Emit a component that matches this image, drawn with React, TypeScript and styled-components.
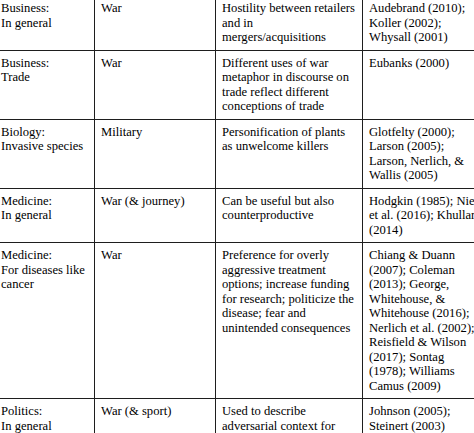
import styled, { createGlobalStyle } from 'styled-components';

const GlobalStyle = createGlobalStyle`
  html, body {
    margin: 0;
    padding: 0;
    background: #fff;
    overflow: hidden;
  }
`;

const Page = styled.div`
  width: 474px;
  height: 433px;
  overflow: hidden;
  background: #fff;
`;

const Table = styled.table`
  margin: -5px 0 0 -6px;
  width: 493px;
  table-layout: fixed;
  border-collapse: collapse;
  font-family: 'Liberation Serif', 'Times New Roman', serif;
  font-size: 12.6px;
  line-height: 14.5px;
  color: #000;
`;

const Col = styled.col<{ $w: number }>`
  width: ${(p) => p.$w}px;
`;

const Cell = styled.td`
  border: 1px solid #1e1e1e;
  padding: 5px 5px 5px 6px;
  vertical-align: top;
  text-align: left;
  white-space: normal;
`;

type Row = {
  domain: [string, string];
  metaphor: string;
  use: string;
  refs: string;
};

const rows: Row[] = [
  {
    domain: ['Business:', 'In general'],
    metaphor: 'War',
    use: 'Hostility between retailers and in mergers/acquisitions',
    refs: 'Audebrand (2010); Koller (2002); Whysall (2001)',
  },
  {
    domain: ['Business:', 'Trade'],
    metaphor: 'War',
    use: 'Different uses of war metaphor in discourse on trade reflect different conceptions of trade',
    refs: 'Eubanks (2000)',
  },
  {
    domain: ['Biology:', 'Invasive species'],
    metaphor: 'Military',
    use: 'Personification of plants as unwelcome killers',
    refs: 'Glotfelty (2000); Larson (2005); Larson, Nerlich, & Wallis (2005)',
  },
  {
    domain: ['Medicine:', 'In general'],
    metaphor: 'War (& journey)',
    use: 'Can be useful but also counterproductive',
    refs: 'Hodgkin (1985); Nie et al. (2016); Khullar (2014)',
  },
  {
    domain: ['Medicine:', 'For diseases like cancer'],
    metaphor: 'War',
    use: 'Preference for overly aggressive treatment options; increase funding for research; politicize the disease; fear and unintended consequences',
    refs: 'Chiang & Duann (2007); Coleman (2013); George, Whitehouse, & Whitehouse (2016); Nerlich et al. (2002); Reisfield & Wilson (2017); Sontag (1978); Williams Camus (2009)',
  },
  {
    domain: ['Politics:', 'In general'],
    metaphor: 'War (& sport)',
    use: 'Used to describe adversarial context for politics',
    refs: 'Johnson (2005); Steinert (2003)',
  },
];

export default function App() {
  return (
    <Page>
      <GlobalStyle />
      <Table>
        <colgroup>
          <Col $w={100} />
          <Col $w={121} />
          <Col $w={147} />
          <Col $w={125} />
        </colgroup>
        <tbody>
          {rows.map((r) => (
            <tr key={r.domain.join(' ') + r.refs}>
              <Cell>
                {r.domain[0]}
                <br />
                {r.domain[1]}
              </Cell>
              <Cell>{r.metaphor}</Cell>
              <Cell>{r.use}</Cell>
              <Cell>{r.refs}</Cell>
            </tr>
          ))}
        </tbody>
      </Table>
    </Page>
  );
}
